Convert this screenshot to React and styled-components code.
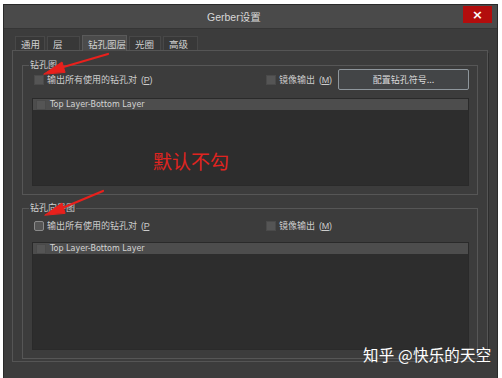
import styled, { createGlobalStyle } from "styled-components";

const GlobalStyle = createGlobalStyle`
  body {
    margin: 0;
    background: #ffffff;
    font-family: "Liberation Sans", "Noto Sans CJK SC", sans-serif;
  }
`;

const tabs = [
    { label: "通用", width: 30 },
    { label: "层", width: 33 },
    { label: "钻孔图层", width: 45, active: true },
    { label: "光圈", width: 32 },
    { label: "高级", width: 35 },
];

export default function App() {
    return (
        <>
            <GlobalStyle />
            <Window>
                <TitleBar>
                    <Title>Gerber设置</Title>
                    <CloseButton>×</CloseButton>
                </TitleBar>
                <Body>
                    <TabRow>
                        {tabs.map((t) => (
                            <Tab key={t.label} $width={t.width} $active={t.active}>
                                {t.label}
                            </Tab>
                        ))}
                    </TabRow>
                    <Panel>
                        <Group>
                            <Legend>钻孔图</Legend>
                            <OptionRow $height={21}>
                                <Check $width={230}>
                                    <Box />
                                    输出所有使用的钻孔对<Key>(<u>P</u>)</Key>
                                </Check>
                                <Check>
                                    <Box />
                                    镜像输出<Key>(<u>M</u>)</Key>
                                </Check>
                                <ConfigButton>配置钻孔符号...</ConfigButton>
                            </OptionRow>
                            <LayerList $height={86} $gap={8}>
                                <ListHeader>
                                    <Box />
                                    Top Layer-Bottom Layer
                                </ListHeader>
                                <ListBody />
                            </LayerList>
                        </Group>
                        <Group $gap={8}>
                            <Legend>钻孔向导图</Legend>
                            <OptionRow $height={13} $gap={6}>
                                <Check $width={230}>
                                    <Box $focused />
                                    输出所有使用的钻孔对<Key>(<u>P</u></Key>
                                </Check>
                                <Check>
                                    <Box />
                                    镜像输出<Key>(<u>M</u>)</Key>
                                </Check>
                            </OptionRow>
                            <LayerList $height={106} $gap={10}>
                                <ListHeader>
                                    <Box />
                                    Top Layer-Bottom Layer
                                </ListHeader>
                                <ListBody />
                            </LayerList>
                        </Group>
                    </Panel>
                </Body>

                <Note>默认不勾</Note>
                <Watermark>知乎 @快乐的天空</Watermark>
                <Arrows width="495" height="374" viewBox="0 0 495 374">
                    <g fill="#e8201c" stroke="#e8201c" strokeLinecap="round">
                        <path d="M104 49 L56 63" strokeWidth="2.2" fill="none" />
                        <polygon points="40,69 58,57 61,67" strokeWidth="1" />
                        <path d="M99 186 L56 204" strokeWidth="2.2" fill="none" />
                        <polygon points="41,210 58,198 61,208" strokeWidth="1" />
                    </g>
                </Arrows>
            </Window>
        </>
    );
}

const Window = styled.div`
  position: relative;
  margin: 4px 0 0 3px;
  width: 493px;
  height: 374px;
  background: #3c3c3c;
  border: 1px solid #2a2a2a;
  border-bottom: none;
  overflow: hidden;
`;

const TitleBar = styled.div`
  height: 23px;
  display: flex;
  align-items: center;
  background: #4a4a4a;
  border-bottom: 1px solid #353535;
`;

const Title = styled.div`
  flex: 1;
  padding-left: 203px;
  font-size: 10.5px;
  color: #d8d8d8;
`;

const CloseButton = styled.div`
  width: 29px;
  height: 17px;
  margin: -5px 5px 0 0;
  display: flex;
  align-items: center;
  justify-content: center;
  background: #b30d0d;
  color: #ffffff;
  font-family: "DejaVu Sans", sans-serif;
  font-size: 13px;
  font-weight: bold;
`;

const Body = styled.div`
  padding: 7px 8px 0 8px;
`;

const TabRow = styled.div`
  display: flex;
  align-items: flex-end;
  gap: 2px;
  height: 14px;
  padding-left: 3px;
`;

const Tab = styled.div`
  width: ${(p) => p.$width}px;
  height: ${(p) => (p.$active ? 16 : 14)}px;
  box-sizing: border-box;
  padding-left: 5px;
  display: flex;
  align-items: center;
  font-size: 9.5px;
  color: #d0d0d0;
  background: ${(p) => (p.$active ? "#4b4b4b" : "#383838")};
  border: 1px solid ${(p) => (p.$active ? "#5a5a5a" : "#484848")};
  border-bottom: none;
  margin-bottom: ${(p) => (p.$active ? "-1px" : "0")};
  position: relative;
  z-index: ${(p) => (p.$active ? 1 : 0)};
`;

const Panel = styled.div`
  width: 476px;
  box-sizing: border-box;
  padding: 9px 9px 2px 9px;
  border: 1px solid #555555;
  box-shadow: 4px 0 0 -3px #2e2e2e;
`;

const Group = styled.fieldset`
  margin: ${(p) => p.$gap || 0}px 0 0 0;
  padding: 0 8px 8px 9px;
  border: 1px solid #565656;
  display: flex;
  flex-direction: column;
  min-width: 0;
`;

const Legend = styled.legend`
  margin-left: -3px;
  padding: 0 1px;
  font-size: 9px;
  line-height: 10px;
  color: #cfcfcf;
`;

const OptionRow = styled.div`
  display: flex;
  align-items: center;
  height: ${(p) => p.$height}px;
  margin-top: ${(p) => (p.$gap ? p.$gap : -1)}px;
`;

const Check = styled.label`
  display: flex;
  align-items: center;
  gap: 3px;
  width: ${(p) => (p.$width ? `${p.$width}px` : "auto")};
  margin-left: 2px;
  font-size: 9px;
  color: #cccccc;
  white-space: nowrap;
`;

const Key = styled.span`
  margin-left: 1px;
  font-family: "Liberation Sans", sans-serif;
  letter-spacing: -0.3px;
  u {
    text-decoration: underline;
  }
`;

const Box = styled.span`
  width: 8px;
  height: 8px;
  background: #555555;
  border: 1px solid ${(p) => (p.$focused ? "#8a8a8a" : "#4a4a4a")};
  border-radius: ${(p) => (p.$focused ? "2px" : "0")};
  flex: none;
`;

const ConfigButton = styled.button`
  margin-left: auto;
  width: 131px;
  height: 21px;
  background: #434547;
  border: 1px solid #8e969c;
  border-radius: 2px;
  color: #dadada;
  font-family: "Noto Sans CJK SC", sans-serif;
  font-size: 9px;
  padding: 0;
`;

const LayerList = styled.div`
  margin-top: ${(p) => p.$gap}px;
  height: ${(p) => p.$height}px;
  display: flex;
  flex-direction: column;
  background: #2e2e2e;
  border: 1px solid #2a2a2a;
`;

const ListHeader = styled.div`
  height: 11px;
  display: flex;
  align-items: center;
  gap: 4px;
  padding-left: 3px;
  background: #4d4d4d;
  font-family: "DejaVu Sans", sans-serif;
  font-size: 8px;
  color: #d4d4d4;
`;

const ListBody = styled.div`
  flex: 1;
  background: #2d2d2d;
`;

const Note = styled.div`
  position: absolute;
  left: 149px;
  top: 142px;
  font-family: "Noto Sans CJK SC", sans-serif;
  font-size: 19px;
  color: #e02420;
`;

const Watermark = styled.div`
  position: absolute;
  left: 359px;
  top: 338px;
  font-family: "Noto Sans CJK SC", sans-serif;
  font-size: 15.5px;
  color: #ffffff;
  letter-spacing: 0.2px;
`;

const Arrows = styled.svg`
  position: absolute;
  left: 0;
  top: 0;
  pointer-events: none;
`;
